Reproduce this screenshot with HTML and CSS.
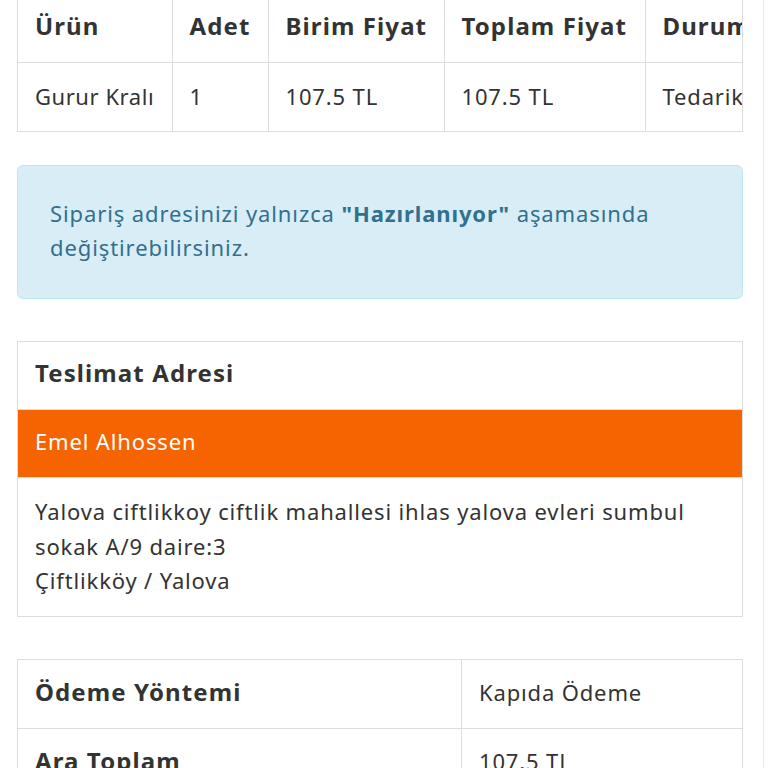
FILE: index.html
```html
<!DOCTYPE html>
<html lang="tr">
<head>
<meta charset="utf-8">
<link rel="stylesheet" href="styles.css">
</head>
<body>
<div class="page">
  <div class="tbl-wrap">
    <table class="tbl items">
      <colgroup>
        <col class="c1"><col class="c2"><col class="c3"><col class="c4"><col class="c5">
      </colgroup>
      <thead>
        <tr><th>Ürün</th><th>Adet</th><th>Birim Fiyat</th><th>Toplam Fiyat</th><th>Durum</th></tr>
      </thead>
      <tbody>
        <tr><td>Gurur Kralı</td><td>1</td><td>107.5 TL</td><td>107.5 TL</td><td>Tedarik Aşamasında</td></tr>
      </tbody>
    </table>
  </div>

  <div class="alert">
    Sipariş adresinizi yalnızca <strong>"Hazırlanıyor"</strong> aşamasında değiştirebilirsiniz.
  </div>

  <div class="panel">
    <div class="panel-heading">Teslimat Adresi</div>
    <div class="panel-name">Emel Alhossen</div>
    <div class="panel-body">
      Yalova ciftlikkoy ciftlik mahallesi ihlas yalova evleri sumbul sokak A/9 daire:3<br>
      Çiftlikköy / Yalova
    </div>
  </div>

  <table class="tbl summary">
    <colgroup><col class="s1"><col class="s2"></colgroup>
    <tbody>
      <tr><th>Ödeme Yöntemi</th><td>Kapıda Ödeme</td></tr>
      <tr><th>Ara Toplam</th><td>107.5 TL</td></tr>
      <tr><th>Kargo</th><td>0 TL</td></tr>
    </tbody>
  </table>
</div>
</body>
</html>
```

FILE: styles.css
```css
html, body {
  margin: 0;
  padding: 0;
  background: #fff;
}
body {
  font-family: "Noto Sans", "Open Sans", sans-serif;
  color: #333;
  font-size: 22px;
  line-height: 34px;
  letter-spacing: 0.85px;
  overflow: hidden;
}
.page {
  box-sizing: border-box;
  width: 764px;
  min-height: 768px;
  border-right: 1px solid #e8e8e8;
  padding: 0 20px 0 17px;
}
.tbl-wrap {
  margin-top: -8px;
  overflow: hidden;
  border: 1px solid #ddd;
  border-top: 0;
}
.tbl {
  border-collapse: collapse;
  table-layout: fixed;
}
.items {
  width: 878px;
}
.c1 { width: 154px; }
.c2 { width: 96px; }
.c3 { width: 176px; }
.c4 { width: 201px; }
.c5 { width: 251px; }
.tbl th, .tbl td {
  border: 1px solid #ddd;
  padding: 15px 17px 19px;
  text-align: left;
  vertical-align: middle;
  white-space: nowrap;
  overflow: hidden;
}
.items thead th {
  padding: 17px 17px 19px;
}
.items tbody td {
  padding: 16px 17px 18px;
}
.items tr:first-child th { border-top: 0; }
.items tr > :first-child { border-left: 0; }
.items tbody tr:last-child td { border-bottom: 0; }
.tbl th {
  font-weight: 700;
  font-size: 24px;
  letter-spacing: 1.1px;
}
.tbl td {
  font-size: 22px;
}
.items td:first-child {
  letter-spacing: 0.55px;
}

.alert {
  margin-top: 33px;
  background: #d9edf7;
  border: 1px solid #bce8f1;
  border-radius: 6px;
  color: #31708f;
  padding: 30px 32px 34px;
  font-size: 22px;
  letter-spacing: 0.9px;
}
.alert strong {
  font-weight: 700;
}

.panel {
  margin-top: 42px;
  border: 1px solid #ddd;
}
.panel-heading {
  padding: 14px 17px 19px;
  font-weight: 700;
  font-size: 24px;
  letter-spacing: 1.1px;
  border-bottom: 1px solid #ddd;
}
.panel-name {
  background: #f56400;
  color: #fff;
  padding: 14px 17px 19px;
  font-size: 22px;
  border-bottom: 1px solid #ddd;
}
.panel-body {
  padding: 16px 17px 18px;
  font-size: 22px;
  line-height: 34.5px;
}

.summary {
  margin-top: 42px;
  width: 726px;
}
.s1 { width: 444px; }
```
